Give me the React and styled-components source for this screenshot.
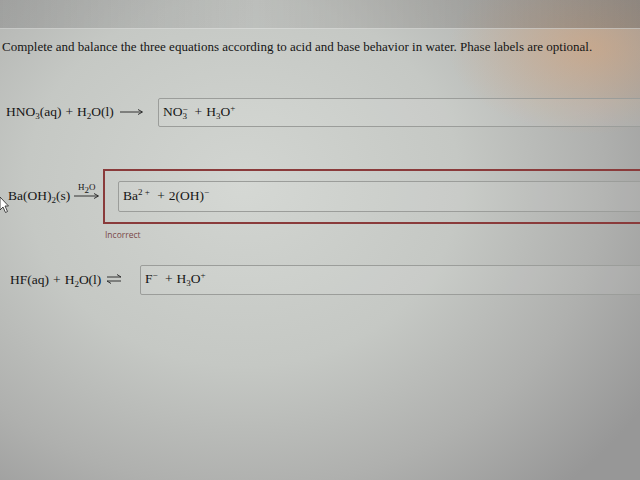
import React from "react";
import styled, { createGlobalStyle } from "styled-components";

const Global = createGlobalStyle`
  html, body { margin: 0; padding: 0; }
  body { width: 640px; height: 480px; overflow: hidden; }
`;

const Page = styled.div`
  position: relative;
  width: 640px;
  height: 480px;
  overflow: hidden;
  font-family: "Liberation Serif", "Times New Roman", serif;
  color: #151515;
  background:
    radial-gradient(ellipse 22% 18% at 92% 10%, rgba(225, 165, 115, 0.5), rgba(225, 165, 115, 0) 100%),
    radial-gradient(ellipse 75% 85% at 38% 38%, #d2d5d1 0%, #c5c8c4 45%, #afb0ae 75%, #979797 100%);
  display: flex;
  flex-direction: column;
`;

const TopBand = styled.div`
  height: 28px;
  background: linear-gradient(90deg, rgba(120,120,120,0.35), rgba(150,150,150,0.2) 40%, rgba(110,105,100,0.45));
  border-bottom: 1px solid rgba(235, 238, 235, 0.5);
`;

const Instruction = styled.div`
  margin: 10px 0 0 2px;
  font-size: 13px;
  line-height: 15px;
  white-space: nowrap;
`;

const Row = styled.div`
  display: flex;
  align-items: center;
  height: ${(p) => p.$h}px;
  margin-top: ${(p) => p.$top}px;
  padding-left: ${(p) => p.$left}px;
`;

const Label = styled.div`
  font-size: 13.5px;
  line-height: 16px;
  white-space: nowrap;
  width: ${(p) => p.$w}px;
  margin-bottom: ${(p) => p.$lift || 0}px;
  flex-shrink: 0;
`;

const Sub = styled.sub`
  font-size: 9px;
  vertical-align: -3px;
  line-height: 0;
`;

const Sup = styled.sup`
  font-size: 9px;
  vertical-align: 5px;
  line-height: 0;
`;

const Stack = styled.span`
  display: inline-block;
  font-size: 9px;
  line-height: 7px;
  vertical-align: -3px;
  margin-right: 3px;
  & > span { display: block; }
`;

const Plus = styled.span`
  margin: 0 4px;
`;

const AnswerBox = styled.div`
  flex: 1;
  height: ${(p) => p.$h}px;
  line-height: ${(p) => p.$h - 4}px;
  margin-right: -6px;
  border: 1px solid #9b9d9a;
  border-radius: 2px;
  background: rgba(255, 255, 255, 0.07);
  padding-left: 4px;
  font-size: 13.5px;
  white-space: nowrap;
  box-sizing: border-box;
`;

const ErrorFrame = styled.div`
  flex: 1;
  height: 55px;
  margin-right: -6px;
  border: 2px solid #8a3b3b;
  box-sizing: border-box;
  display: flex;
  align-items: center;
  padding-left: 13px;
`;

const Feedback = styled.div`
  margin: 5px 0 0 105px;
  font-family: "Open Sans", "Liberation Sans", sans-serif;
  font-size: 8.5px;
  color: #7b4848;
`;

const ArrowWrap = styled.span`
  display: inline-block;
  vertical-align: ${(p) => p.$va || 0}px;
  margin-left: ${(p) => p.$ml || 4}px;
`;

const Stacked = styled.span`
  display: inline-flex;
  flex-direction: column;
  align-items: center;
  vertical-align: 10px;
  margin-left: 4px;
`;

const Over = styled.span`
  font-size: 9px;
  line-height: 10px;
`;

const Cursor = styled.svg`
  position: absolute;
  left: -1px;
  top: 196px;
`;

const RightArrow = ({ w = 24 }) => (
  <svg width={w} height="8" viewBox={`0 0 ${w} 8`} style={{ display: "block" }}>
    <line x1="0" y1="4" x2={w - 1} y2="4" stroke="#222" strokeWidth="0.9" />
    <path d={`M${w - 5} 1.5 L${w - 0.5} 4 L${w - 5} 6.5`} fill="none" stroke="#222" strokeWidth="0.9" />
  </svg>
);

const Equil = () => (
  <svg width="16" height="10" viewBox="0 0 16 10" style={{ display: "block" }}>
    <line x1="1" y1="3" x2="15" y2="3" stroke="#222" strokeWidth="0.9" />
    <path d="M11 0.5 L15 3" fill="none" stroke="#222" strokeWidth="0.9" />
    <line x1="1" y1="7" x2="15" y2="7" stroke="#222" strokeWidth="0.9" />
    <path d="M5 9.5 L1 7" fill="none" stroke="#222" strokeWidth="0.9" />
  </svg>
);

export default function App() {
  return (
    <Page>
      <Global />
      <TopBand />
      <Instruction>
        Complete and balance the three equations according to acid and base behavior in water. Phase labels are optional.
      </Instruction>

      <Row $top={44} $left={6} $h={29}>
        <Label $w={152} $lift={2}>
          HNO<Sub>3</Sub>(aq)<Plus>+</Plus>H<Sub>2</Sub>O(l)
          <ArrowWrap $ml={6} $va={0}><RightArrow w={23} /></ArrowWrap>
        </Label>
        <AnswerBox $h={29}>
          NO
          <Stack>
            <span>−</span>
            <span>3</span>
          </Stack>
          <Plus>+</Plus>H<Sub>3</Sub>O<Sup>+</Sup>
        </AnswerBox>
      </Row>

      <Row $top={42} $left={8} $h={55}>
        <Label $w={95} $lift={7}>
          Ba(OH)<Sub>2</Sub>(s)
          <Stacked>
            <Over>H<Sub>2</Sub>O</Over>
            <RightArrow w={25} />
          </Stacked>
        </Label>
        <ErrorFrame>
          <AnswerBox $h={31}>
            Ba<Sup>2 +</Sup>
            <Plus>&nbsp;+</Plus>2(OH)<Sup>−</Sup>
          </AnswerBox>
        </ErrorFrame>
      </Row>
      <Feedback>Incorrect</Feedback>

      <Row $top={25} $left={10} $h={30}>
        <Label $w={130}>
          HF(aq)<Plus>+</Plus>H<Sub>2</Sub>O(l)
          <ArrowWrap $ml={5} $va={0}><Equil /></ArrowWrap>
        </Label>
        <AnswerBox $h={30}>
          F<Sup>−</Sup>
          <Plus>&nbsp;+</Plus>H<Sub>3</Sub>O<Sup>+</Sup>
        </AnswerBox>
      </Row>

      <Cursor width="10" height="18" viewBox="0 0 10 18">
        <path d="M1 1 L1 14 L4 11 L6.5 16.5 L8.5 15.5 L6 10 L9.5 10 Z" fill="#fff" stroke="#333" strokeWidth="0.9" />
      </Cursor>
    </Page>
  );
}
